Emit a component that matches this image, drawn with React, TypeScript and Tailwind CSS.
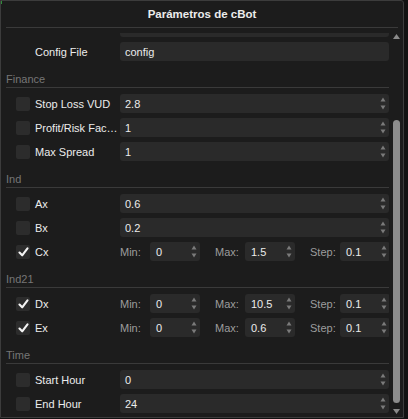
import React from 'react';

type Range = { min: string; max: string; step: string };

interface Param {
  label: string;
  value?: string;
  checked?: boolean;
  range?: Range;
  noCheck?: boolean;
  spin?: boolean;
}

interface Section {
  title: string;
  params: Param[];
}

const sections: Section[] = [
  {
    title: 'Finance',
    params: [
      { label: 'Stop Loss VUD', value: '2.8' },
      { label: 'Profit/Risk Factor', value: '1' },
      { label: 'Max Spread', value: '1' },
    ],
  },
  {
    title: 'Ind',
    params: [
      { label: 'Ax', value: '0.6' },
      { label: 'Bx', value: '0.2' },
      { label: 'Cx', checked: true, range: { min: '0', max: '1.5', step: '0.1' } },
    ],
  },
  {
    title: 'Ind21',
    params: [
      { label: 'Dx', checked: true, range: { min: '0', max: '10.5', step: '0.1' } },
      { label: 'Ex', checked: true, range: { min: '0', max: '0.6', step: '0.1' } },
    ],
  },
  {
    title: 'Time',
    params: [
      { label: 'Start Hour', value: '0' },
      { label: 'End Hour', value: '24' },
    ],
  },
];

function Spinner() {
  return (
    <svg width="6" height="13" viewBox="0 0 6 13" className="shrink-0">
      <path d="M3 0.5 L5.5 4.5 L0.5 4.5 Z" fill="#7a7a7a" />
      <path d="M3 12.5 L5.5 8.5 L0.5 8.5 Z" fill="#7a7a7a" />
    </svg>
  );
}

function Field({ value, spin = true, className = '' }: { value: string; spin?: boolean; className?: string }) {
  return (
    <div className={`h-[19px] rounded-[3px] bg-[#2a2a2a] flex items-center pr-[3px] ${className}`}>
      <span className="flex-1 text-[#ececec] pt-[1px]">{value}</span>
      {spin && <Spinner />}
    </div>
  );
}

function CheckBox({ checked }: { checked?: boolean }) {
  return (
    <div className="w-[14px] h-[14px] rounded-[2px] bg-[#2c2c2c] flex items-center justify-center shrink-0">
      {checked && (
        <svg width="11" height="10" viewBox="0 0 11 10">
          <path d="M1.5 5.5 L4.2 8.3 L9.5 1.3" stroke="#f4f4f4" strokeWidth="2.1" fill="none" strokeLinecap="round" strokeLinejoin="round" />
        </svg>
      )}
    </div>
  );
}

function Row({ p }: { p: Param }) {
  return (
    <div className="flex items-center h-[19px] pl-[15px]">
      <div className="w-[14px] shrink-0">{!p.noCheck && <CheckBox checked={p.checked} />}</div>
      <div className="w-[90px] shrink-0 pl-[5px] pr-[2px] truncate text-[#ececec]">{p.label}</div>
      {p.range ? (
        <div className="flex-1 flex items-center gap-[15px]">
          <div className="flex items-center">
            <span className="w-[30px] text-[#9c9c9c]">Min:</span>
            <Field value={p.range.min} className="w-[50px] pl-[6px]" />
          </div>
          <div className="flex items-center">
            <span className="w-[30px] text-[#9c9c9c]">Max:</span>
            <Field value={p.range.max} className="w-[50px] pl-[6px]" />
          </div>
          <div className="flex items-center">
            <span className="w-[30px] text-[#9c9c9c]">Step:</span>
            <Field value={p.range.step} className="w-[50px] pl-[6px]" />
          </div>
        </div>
      ) : (
        <Field value={p.value ?? ''} spin={p.spin !== false} className="flex-1 pl-[5px]" />
      )}
    </div>
  );
}

export default function App() {
  return (
    <div className="w-[408px] h-[419px] bg-[#121212] font-['Liberation_Sans',Arial,sans-serif] text-[11px] leading-[14px] select-none">
      <div className="relative w-[404px] h-[418px] bg-[#1c1c1c] border border-[#3c3c3c] rounded-tr-[3px] flex flex-col overflow-hidden">
        <span className="absolute left-[-1px] top-[-1px] w-[2px] h-[4px] bg-[#2f8f3a]" />
        <div className="h-[26px] flex items-center justify-center font-bold text-[#ececec] text-[11.5px]">
          Parámetros de cBot
        </div>
        <div className="mx-[5px] h-px bg-[#3a3a3a]" />

        <div className="flex flex-1 mt-[5px] overflow-hidden">
          {/* scroll content */}
          <div className="w-[388px] overflow-hidden">
            <div className="mt-[-15px] flex flex-col">
              <div className="flex items-center h-[19px] pl-[119px]">
                <div className="flex-1 h-[19px] rounded-[3px] bg-[#2a2a2a]" />
              </div>
              <div className="mt-[5px] mb-[5px]">
                <Row p={{ label: 'Config File', value: 'config', noCheck: true, spin: false }} />
              </div>
              {sections.map((s) => (
                <div key={s.title} className="flex flex-col">
                  <div className="h-[21px] pt-[6px] pl-[5px] text-[11px] text-[#767676]">{s.title}</div>
                  <div className="ml-[5px] h-px bg-[#3a3a3a]" />
                  <div className="flex flex-col gap-[5px] mt-[6px]">
                    {s.params.map((p) => (
                      <Row key={p.label} p={p} />
                    ))}
                  </div>
                  <div className="h-[5px]" />
                </div>
              ))}
            </div>
          </div>

          {/* scrollbar */}
          <div className="flex-1 flex flex-col items-center pt-[1px] pb-[3px] pl-[1px]">
            <svg width="7" height="5" viewBox="0 0 7 5">
              <path d="M3.5 0 L7 5 L0 5 Z" fill="#8a8a8a" />
            </svg>
            <div className="flex-1 w-full flex flex-col pt-[81px] pb-[6px] items-center">
              <div className="w-[7px] flex-1 rounded-[4px] bg-[#8c8c8c]" />
            </div>
            <svg width="7" height="5" viewBox="0 0 7 5">
              <path d="M3.5 5 L7 0 L0 0 Z" fill="#8a8a8a" />
            </svg>
          </div>
        </div>
      </div>
    </div>
  );
}
